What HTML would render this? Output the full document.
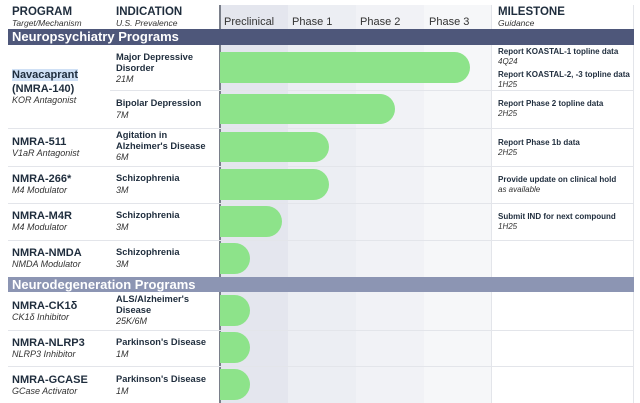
<!DOCTYPE html><html><head><style>
*{margin:0;padding:0;box-sizing:border-box}
body{width:640px;height:403px;overflow:hidden;background:#fff;font-family:"Liberation Sans",sans-serif;color:#1f2d3d;position:relative}
div{position:absolute}
.b{font-weight:bold}
.i{font-style:italic;color:#333}
.t{font-size:11px;line-height:13px}
.s{font-size:9px;line-height:11px}
.bar{background:#8de38a;border-radius:0 16px 16px 0;left:220px}
.hl{height:1px;background:#e3e5ea}
.ms{left:498px;font-size:8px;line-height:10px;white-space:nowrap}
.ind{left:116px;font-size:9.3px;line-height:11px;font-weight:bold}
</style></head><body>
<div style="left:220px;top:5px;width:68px;height:398px;background:#e4e6ee"></div>
<div style="left:288px;top:5px;width:68px;height:398px;background:#eceef3"></div>
<div style="left:356px;top:5px;width:68px;height:398px;background:#f1f2f6"></div>
<div style="left:424px;top:5px;width:68px;height:398px;background:#f6f7f9"></div>
<div style="left:491px;top:5px;width:1px;height:398px;background:#e3e5ea"></div>
<div style="left:633px;top:5px;width:1px;height:398px;background:#e3e5ea"></div>
<div style="left:219px;top:5px;width:1.5px;height:398px;background:#7a7f8a"></div>
<div class="b" style="left:12px;top:6px;font-size:11.5px">PROGRAM</div>
<div class="i" style="left:12px;top:18px;font-size:8.5px">Target/Mechanism</div>
<div class="b" style="left:116px;top:6px;font-size:11.5px">INDICATION</div>
<div class="i" style="left:116px;top:18px;font-size:8.5px">U.S. Prevalence</div>
<div style="left:224px;top:16px;font-size:11px;color:#333">Preclinical</div>
<div style="left:292px;top:16px;font-size:11px;color:#333">Phase 1</div>
<div style="left:360px;top:16px;font-size:11px;color:#333">Phase 2</div>
<div style="left:429px;top:16px;font-size:11px;color:#333">Phase 3</div>
<div class="b" style="left:498px;top:6px;font-size:11.5px">MILESTONE</div>
<div class="i" style="left:498px;top:18px;font-size:8.5px">Guidance</div>
<div class="b" style="left:8px;top:29px;width:626px;height:16px;background:#4e577a;color:#fff;font-size:13px;line-height:16px;padding-left:4px">Neuropsychiatry Programs</div>
<div class="b" style="left:8px;top:277px;width:626px;height:15px;background:#8c95b3;color:#fff;font-size:13px;line-height:15px;padding-left:4px">Neurodegeneration Programs</div>
<div class="hl" style="left:110px;top:90px;width:110px"></div>
<div class="hl" style="left:220px;top:90px;width:414px"></div>
<div class="hl" style="left:8px;top:128px;width:626px"></div>
<div class="hl" style="left:8px;top:166px;width:626px"></div>
<div class="hl" style="left:8px;top:203px;width:626px"></div>
<div class="hl" style="left:8px;top:240px;width:626px"></div>
<div class="hl" style="left:8px;top:330px;width:626px"></div>
<div class="hl" style="left:8px;top:366px;width:626px"></div>
<div class="bar" style="top:52px;width:250px;height:31px"></div>
<div class="bar" style="top:94px;width:175px;height:30px"></div>
<div class="bar" style="top:132px;width:109px;height:30px"></div>
<div class="bar" style="top:169px;width:109px;height:31px"></div>
<div class="bar" style="top:206px;width:62px;height:31px"></div>
<div class="bar" style="top:243px;width:30px;height:31px"></div>
<div class="bar" style="top:295px;width:30px;height:31px"></div>
<div class="bar" style="top:332px;width:30px;height:31px"></div>
<div class="bar" style="top:369px;width:30px;height:31px"></div>
<div class="b t" style="left:12px;top:68px;line-height:14px"><span style="background:#cfe0f5">Navacaprant</span><br>(NMRA-140)</div>
<div class="i s" style="left:12px;top:95px">KOR Antagonist</div>
<div class="b t" style="left:12px;top:136px">NMRA-511</div><div class="i s" style="left:12px;top:148px">V1aR Antagonist</div>
<div class="b t" style="left:12px;top:173px">NMRA-266*</div><div class="i s" style="left:12px;top:185px">M4 Modulator</div>
<div class="b t" style="left:12px;top:210px">NMRA-M4R</div><div class="i s" style="left:12px;top:222px">M4 Modulator</div>
<div class="b t" style="left:12px;top:247px">NMRA-NMDA</div><div class="i s" style="left:12px;top:259px">NMDA Modulator</div>
<div class="b t" style="left:12px;top:300px">NMRA-CK1δ</div><div class="i s" style="left:12px;top:312px">CK1δ Inhibitor</div>
<div class="b t" style="left:12px;top:337px">NMRA-NLRP3</div><div class="i s" style="left:12px;top:349px">NLRP3 Inhibitor</div>
<div class="b t" style="left:12px;top:374px">NMRA-GCASE</div><div class="i s" style="left:12px;top:386px">GCase Activator</div>
<div class="ind" style="top:52px">Major Depressive<br>Disorder</div><div class="i s" style="left:116px;top:74px">21M</div>
<div class="ind" style="top:98px">Bipolar Depression</div><div class="i s" style="left:116px;top:110px">7M</div>
<div class="ind" style="top:130px">Agitation in<br>Alzheimer's Disease</div><div class="i s" style="left:116px;top:152px">6M</div>
<div class="ind" style="top:173px">Schizophrenia</div><div class="i s" style="left:116px;top:185px">3M</div>
<div class="ind" style="top:210px">Schizophrenia</div><div class="i s" style="left:116px;top:222px">3M</div>
<div class="ind" style="top:247px">Schizophrenia</div><div class="i s" style="left:116px;top:259px">3M</div>
<div class="ind" style="top:294px">ALS/Alzheimer's<br>Disease</div><div class="i s" style="left:116px;top:316px">25K/6M</div>
<div class="ind" style="top:337px">Parkinson's Disease</div><div class="i s" style="left:116px;top:349px">1M</div>
<div class="ind" style="top:374px">Parkinson's Disease</div><div class="i s" style="left:116px;top:386px">1M</div>
<div class="ms b" style="top:47px">Report KOASTAL-1 topline data</div><div class="ms i" style="top:57px">4Q24</div>
<div class="ms b" style="top:70px">Report KOASTAL-2, -3 topline data</div><div class="ms i" style="top:80px">1H25</div>
<div class="ms b" style="top:99px">Report Phase 2 topline data</div><div class="ms i" style="top:109px">2H25</div>
<div class="ms b" style="top:138px">Report Phase 1b data</div><div class="ms i" style="top:148px">2H25</div>
<div class="ms b" style="top:175px">Provide update on clinical hold</div><div class="ms i" style="top:185px">as available</div>
<div class="ms b" style="top:212px">Submit IND for next compound</div><div class="ms i" style="top:222px">1H25</div>
</body></html>
